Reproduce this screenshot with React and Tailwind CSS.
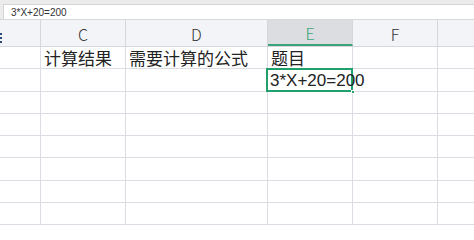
import React from "react";

const widths = ["w-[41px]", "w-[85px]", "w-[142px]", "w-[85px]", "w-[85px]"];
const font = { fontFamily: '"Noto Sans CJK SC", "Liberation Sans", sans-serif' };

function Row({ cells, last }) {
  return (
    <div className="flex h-[22.25px] border-b border-[#dcdce4]">
      {widths.map((w, i) => (
        <div key={i} className={`${w} shrink-0 border-r border-[#dcdce4] relative flex items-end`}>
          {cells && cells[i]}
        </div>
      ))}
      <div className="flex-1" />
    </div>
  );
}

export default function App() {
  const headers = ["", "C", "D", "E", "F"];
  return (
    <div className="w-[474px] h-[236px] bg-white overflow-hidden" style={font}>
      {/* top strip + formula bar */}
      <div className="h-[4px] bg-[#ececec]" />
      <div className="flex h-[16px] bg-[#ececec] border-b border-[#d9d9d9]">
        <div className="w-[3px]" />
        <div className="flex-1 bg-white border-l border-t border-[#d4d4d4] flex items-center pl-[7px] text-[10px] text-[#333]" style={{ fontFamily: '"Liberation Sans", sans-serif' }}>
          3*X+20=200
        </div>
      </div>
      {/* header row */}
      <div className="flex h-[27px] bg-[#f3f4f7] border-b border-[#d6d7dc]">
        {headers.map((h, i) => (
          <div
            key={i}
            className={`${widths[i]} shrink-0 border-r border-[#d6d7dc] flex items-center justify-center text-[16px] font-light ${i === 3 ? "bg-[#dcdde1] text-[#3aa57a] border-b-2 border-b-[#3aa57a]" : "text-[#333]"}`}
          >
            {i === 0 ? (
              <div className="self-stretch w-full flex items-center">
                <div className="flex flex-col gap-[2px] mt-[10px]">
                  <div className="w-[2px] h-[2px] bg-[#2b4a78]" />
                  <div className="w-[2px] h-[2px] bg-[#2b4a78]" />
                  <div className="w-[2px] h-[2px] bg-[#2b4a78]" />
                </div>
              </div>
            ) : (
              <span className="mt-[2px]">{h}</span>
            )}
          </div>
        ))}
        <div className="flex-1" />
      </div>
      <Row
        cells={[
          null,
          <span className="pl-[3px] text-[17px] leading-[20px] text-[#222] whitespace-nowrap">计算结果</span>,
          <span className="pl-[3px] text-[17px] leading-[20px] text-[#222] whitespace-nowrap">需要计算的公式</span>,
          <span className="pl-[3px] text-[17px] leading-[20px] text-[#222] whitespace-nowrap">题目</span>,
          null,
        ]}
      />
      <div className="relative">
        <Row />
        <div className="absolute left-[266px] top-[-1px] w-[87px] h-[24px] border-2 border-[#22a06b] z-10" />
        <div className="absolute left-[351px] top-[21px] w-[4px] h-[4px] bg-[#22a06b] border border-white z-20" />
        <div className="absolute left-[270px] top-0 h-[22px] flex items-end z-30 text-[17px] leading-[20px] text-[#222] whitespace-nowrap" style={{ fontFamily: '"Liberation Sans", sans-serif' }}>
          3*X+20=200
        </div>
      </div>
      {Array.from({ length: 6 }).map((_, i) => (
        <Row key={i} />
      ))}
    </div>
  );
}
